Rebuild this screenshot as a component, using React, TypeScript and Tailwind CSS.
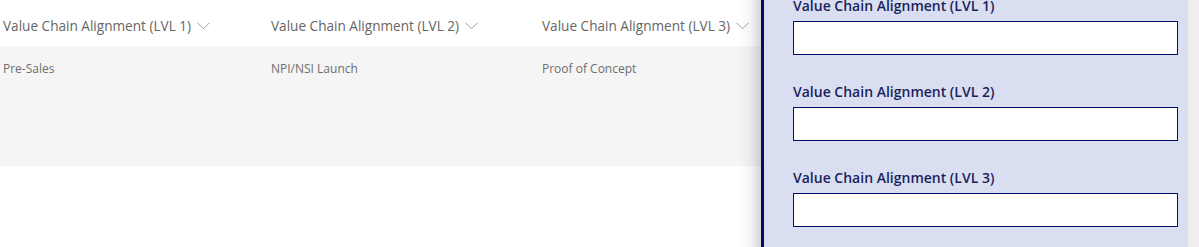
import React from "react";

const Chevron = () => (
  <svg width="13" height="8" viewBox="0 0 13 8" className="ml-[6px] mt-[1px]" fill="none">
    <path d="M0.5 0.8 L6.5 6.8 L12.5 0.8" stroke="#a19f9d" strokeWidth="1" />
  </svg>
);

const cols = [
  { title: "Value Chain Alignment (LVL 1)", value: "Pre-Sales", w: "w-[268px]" },
  { title: "Value Chain Alignment (LVL 2)", value: "NPI/NSI Launch", w: "w-[271px]" },
  { title: "Value Chain Alignment (LVL 3)", value: "Proof of Concept", w: "w-[271px]" },
];

export default function App() {
  return (
    <div
      className="relative w-[1199px] h-[247px] overflow-hidden bg-white"
      style={{ fontFamily: '"Open Sans", "Noto Sans", sans-serif' }}
    >
      <div className="flex flex-col">
        <div className="flex h-[46px] items-center pl-[3px] pt-[6px]">
          {cols.map((c) => (
            <div key={c.title} className={`flex ${c.w} items-center text-[13.6px] text-[#666666]`}>
              <span>{c.title}</span>
              <Chevron />
            </div>
          ))}
        </div>
        <div className="flex h-[120px] bg-[#f5f5f5] pl-[3px] pt-[14px]">
          {cols.map((c) => (
            <div key={c.value} className={`${c.w} text-[12px] text-[#6e6e6e]`}>
              {c.value}
            </div>
          ))}
        </div>
      </div>

      <div className="absolute top-0 right-0 h-full flex">
        <div className="w-[22px] h-full bg-gradient-to-r from-transparent via-[rgba(0,0,0,0.04)] to-[rgba(0,0,0,0.16)]" />
        <div className="w-[3px] h-full bg-[#000d6b]" />
        <div className="w-[424px] h-full bg-[#d9dff0] pl-[29px] pr-[10px]">
          <div className="flex flex-col mt-[-7px]">
            {[1, 2, 3].map((n) => (
              <div key={n} className="flex flex-col mb-[24px]">
                <div className="h-[28px] leading-[26px] text-[14px] font-semibold text-[#1b1f5e]">
                  Value Chain Alignment (LVL {n})
                </div>
                <div className="h-[34px] w-[385px] border border-[#000d6b] bg-white" />
              </div>
            ))}
          </div>
        </div>
        <div className="w-[11px] h-full bg-[#efefef]" />
      </div>
    </div>
  );
}
